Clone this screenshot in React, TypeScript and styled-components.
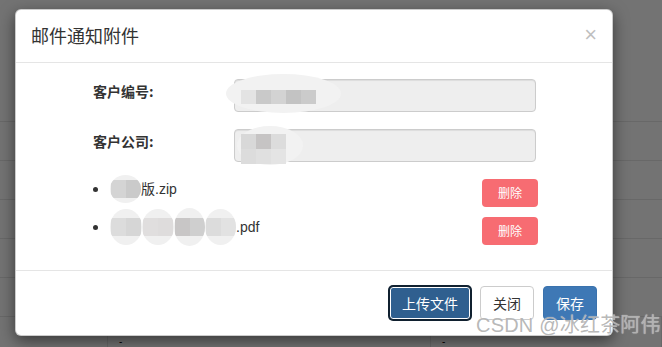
import React from "react";
import styled, { createGlobalStyle } from "styled-components";

const Global = createGlobalStyle`
  html, body { margin: 0; padding: 0; }
  body {
    font-family: "Liberation Sans", "Noto Sans CJK SC", sans-serif;
    font-size: 14px;
    color: #333;
    background: #737373;
  }
`;

const Page = styled.div`
  position: relative;
  width: 662px;
  height: 347px;
  overflow: hidden;
  background: #fff;
`;

const BgTable = styled.div`
  padding-top: 121px;
  display: flex;
  flex-direction: column;
`;

const BgRow = styled.div`
  height: 38px;
  border-top: 1px solid #e6e6e6;
  display: flex;
`;

const BgCell = styled.div<{ $w?: number }>`
  width: ${(p) => (p.$w ? `${p.$w}px` : "auto")};
  flex: ${(p) => (p.$w ? "none" : "1")};
  border-right: 1px solid #e6e6e6;
  padding: 20px 0 0 11px;
  font-size: 10px;
  line-height: 10px;
  color: #000;
`;

const Backdrop = styled.div`
  position: absolute;
  inset: 0;
  background: rgba(0, 0, 0, 0.55);
`;

const Modal = styled.div`
  position: absolute;
  left: 15px;
  top: 9px;
  width: 598px;
  box-sizing: border-box;
  background: #fff;
  border: 1px solid rgba(0, 0, 0, 0.2);
  border-radius: 6px;
  box-shadow: 0 5px 15px rgba(0, 0, 0, 0.5);
`;

const Header = styled.div`
  display: flex;
  justify-content: space-between;
  align-items: flex-start;
  padding: 13px 15px 14px;
  border-bottom: 1px solid #e5e5e5;
`;

const Title = styled.h4`
  margin: 0;
  font-family: "Noto Sans CJK SC", sans-serif;
  font-weight: 400;
  font-size: 18px;
  line-height: 25px;
  color: #333;
`;

const Close = styled.button`
  border: 0;
  background: transparent;
  padding: 0;
  margin-top: 1px;
  font-family: "Liberation Sans", sans-serif;
  font-size: 22px;
  font-weight: 400;
  line-height: 1;
  color: #000;
  opacity: 0.25;
`;

const Body = styled.div`
  padding: 16px 0 25px;
  display: flex;
  flex-direction: column;
`;

const FormRow = styled.div`
  display: flex;
  align-items: flex-start;
  padding-left: 77px;
  margin-bottom: 17px;
`;

const Label = styled.label`
  width: 141px;
  margin-top: 2px;
  font-family: "Noto Sans CJK SC", sans-serif;
  font-weight: 700;
  font-size: 14px;
  line-height: 20px;
  color: #333;
`;

const Input = styled.div`
  position: relative;
  width: 302px;
  height: 33px;
  box-sizing: border-box;
  background: #eee;
  border: 1px solid #ccc;
  border-radius: 4px;
  box-shadow: inset 0 1px 1px rgba(0, 0, 0, 0.075);
`;

const Smudge = styled.div<{ $l: number; $t: number; $w: number; $h: number }>`
  position: absolute;
  left: ${(p) => p.$l}px;
  top: ${(p) => p.$t}px;
  width: ${(p) => p.$w}px;
  height: ${(p) => p.$h}px;
  border-radius: 50%;
  background: #f2f2f2;
`;

const Mosaic = styled.div<{ $l: number; $t: number; $cols: number }>`
  position: absolute;
  left: ${(p) => p.$l}px;
  top: ${(p) => p.$t}px;
  display: grid;
  grid-template-columns: repeat(${(p) => p.$cols}, 15px);
`;

const Tile = styled.span<{ $c: string; $h?: number }>`
  display: block;
  height: ${(p) => p.$h ?? 15}px;
  background: ${(p) => p.$c};
`;

const FileList = styled.ul`
  list-style: none;
  margin: 0;
  padding: 0;
  display: flex;
  flex-direction: column;
  gap: 10px;
`;

const FileItem = styled.li`
  display: flex;
  align-items: flex-start;
  justify-content: space-between;
  padding: 0 74px 0 77px;
`;

const FileName = styled.span`
  display: inline-flex;
  align-items: center;
  gap: 12px;
  font-size: 14px;
  line-height: 20px;
  color: #333;
`;

const Dot = styled.span`
  width: 5px;
  height: 5px;
  border-radius: 50%;
  background: #333;
`;

const NameText = styled.span`
  display: inline-flex;
  align-items: center;
`;

const Disc = styled.span<{ $w: number; $h: number }>`
  width: ${(p) => p.$w}px;
  height: ${(p) => p.$h}px;
  margin: ${(p) => -(p.$h - 20) / 2}px 0;
  border-radius: 50%;
  background: #f0f0f0;
  overflow: hidden;
  display: flex;
  align-items: center;
  justify-content: center;
`;

const DiscTile = styled.span<{ $c: string }>`
  width: 15px;
  height: 18px;
  background: ${(p) => p.$c};
`;

const DangerButton = styled.button`
  width: 56px;
  height: 28px;
  border: 0;
  border-radius: 4px;
  background: #f76c72;
  color: #fff;
  font-family: "Noto Sans CJK SC", sans-serif;
  font-size: 12px;
  line-height: 28px;
  padding: 0;
`;

const Footer = styled.div`
  display: flex;
  justify-content: flex-end;
  gap: 9px;
  padding: 15px;
  border-top: 1px solid #e5e5e5;
`;

const Btn = styled.button<{ $variant: "focus" | "default" | "primary" }>`
  height: 34px;
  box-sizing: border-box;
  padding: 0 12px;
  border-radius: 4px;
  font-family: "Noto Sans CJK SC", sans-serif;
  font-size: 14px;
  line-height: 20px;
  border: 1px solid
    ${(p) => (p.$variant === "default" ? "#ccc" : p.$variant === "primary" ? "#3a72ad" : "#10202f")};
  background: ${(p) => (p.$variant === "default" ? "#fff" : p.$variant === "primary" ? "#3e78b5" : "#2f5f8f")};
  color: ${(p) => (p.$variant === "default" ? "#333" : "#fff")};
  box-shadow: ${(p) =>
    p.$variant === "focus" ? "0 0 0 1px #10202f, inset 0 0 0 1px #fff" : "none"};
  margin-left: ${(p) => (p.$variant === "focus" ? "1px" : "0")};
`;

const Watermark = styled.div`
  position: absolute;
  left: 476px;
  top: 312px;
  font-family: "Liberation Sans", "Noto Sans CJK SC", sans-serif;
  font-size: 20px;
  line-height: 26px;
  color: rgba(175, 175, 175, 0.9);
  text-shadow: 0 0 1px rgba(255, 255, 255, 0.7);
  letter-spacing: 0.2px;
  white-space: nowrap;
`;

const t1 = ["#e3e3e3", "#c9c9c9", "#d3d3d3", "#c3c3c3", "#cbcbcb"];
const t2 = ["#d8d8d8", "#c6c4c4", "#dcdcdc", "#dcdcdc", "#e0e0e0", "#e4e4e4"];

export default function App() {
  return (
    <>
      <Global />
      <Page>
        <BgTable>
          {[0, 1, 2, 3, 4].map((i) => (
            <BgRow key={i} />
          ))}
          <BgRow>
            <BgCell $w={96} />
            <BgCell $w={311}>-</BgCell>
            <BgCell>-</BgCell>
          </BgRow>
        </BgTable>
        <Backdrop />
        <Modal>
          <Header>
            <Title>邮件通知附件</Title>
            <Close>×</Close>
          </Header>
          <Body>
            <FormRow>
              <Label>客户编号:</Label>
              <Input>
                <Smudge $l={-9} $t={-6} $w={115} $h={39} />
                <Mosaic $l={6} $t={10} $cols={5}>
                  {t1.map((c, i) => (
                    <Tile key={i} $c={c} $h={14} />
                  ))}
                </Mosaic>
              </Input>
            </FormRow>
            <FormRow>
              <Label>客户公司:</Label>
              <Input>
                <Smudge $l={2} $t={-4} $w={66} $h={39} />
                <Mosaic $l={6} $t={4} $cols={3}>
                  {t2.map((c, i) => (
                    <Tile key={i} $c={c} />
                  ))}
                </Mosaic>
              </Input>
            </FormRow>
            <FileList>
              <FileItem>
                <FileName>
                  <Dot />
                  <NameText>
                    <Disc $w={31} $h={28}>
                      <DiscTile $c="#d4d4d4" />
                      <DiscTile $c="#cacaca" />
                    </Disc>
                    版.zip
                  </NameText>
                </FileName>
                <DangerButton>删除</DangerButton>
              </FileItem>
              <FileItem>
                <FileName>
                  <Dot />
                  <NameText>
                    <Disc $w={32} $h={36}>
                      <DiscTile $c="#dcdcdc" />
                      <DiscTile $c="#d6d6d6" />
                    </Disc>
                    <Disc $w={32} $h={36}>
                      <DiscTile $c="#e0dede" />
                      <DiscTile $c="#dedcdc" />
                    </Disc>
                    <Disc $w={31} $h={38}>
                      <DiscTile $c="#c8c6c6" />
                      <DiscTile $c="#cfcfcf" />
                    </Disc>
                    <Disc $w={31} $h={36}>
                      <DiscTile $c="#dcdcdc" />
                      <DiscTile $c="#e2e2e2" />
                    </Disc>
                    .pdf
                  </NameText>
                </FileName>
                <DangerButton>删除</DangerButton>
              </FileItem>
            </FileList>
          </Body>
          <Footer>
            <Btn $variant="focus">上传文件</Btn>
            <Btn $variant="default">关闭</Btn>
            <Btn $variant="primary">保存</Btn>
          </Footer>
        </Modal>
        <Watermark>CSDN @冰红茶阿伟</Watermark>
      </Page>
    </>
  );
}
